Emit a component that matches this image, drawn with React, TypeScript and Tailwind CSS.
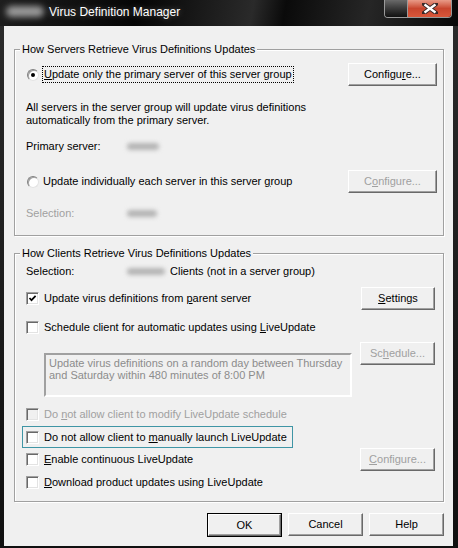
import React from 'react';

const U = ({ children }: { children: React.ReactNode }) => (
  <span className="underline underline-offset-[1px] decoration-[1px]">{children}</span>
);

function Btn({
  children,
  disabled,
  isDefault,
  w = 'w-[75px]',
}: {
  children: React.ReactNode;
  disabled?: boolean;
  isDefault?: boolean;
  w?: string;
}) {
  const face = (
    <div
      className={`h-full w-full flex items-center justify-center bg-[#f0f0f0] border border-t-white border-l-white border-r-[#696969] border-b-[#696969] shadow-[inset_-1px_-1px_0_#a0a0a0] ${
        disabled ? 'text-[#a0a0a0]' : 'text-black'
      }`}
    >
      {children}
    </div>
  );
  if (isDefault) {
    return <div className={`h-[24px] ${w} shrink-0 border border-black`}>{face}</div>;
  }
  return <div className={`h-[23px] ${w} shrink-0`}>{face}</div>;
}

function Check({ checked, disabled }: { checked?: boolean; disabled?: boolean }) {
  return (
    <span
      className={`w-[13px] h-[13px] shrink-0 flex items-center justify-center border border-t-[#a0a0a0] border-l-[#a0a0a0] border-r-white border-b-white shadow-[inset_1px_1px_0_#696969,inset_-1px_-1px_0_#e3e3e3] ${
        disabled ? 'bg-[#f0f0f0]' : 'bg-white'
      }`}
    >
      {checked && (
        <svg width="9" height="9" viewBox="0 0 9 9">
          <path d="M1.5 4 L3.5 6.2 L7.6 1.8" fill="none" stroke="#000" strokeWidth="1.7" />
        </svg>
      )}
    </span>
  );
}

function Radio({ checked }: { checked?: boolean }) {
  return (
    <span className="w-[12px] h-[12px] shrink-0 rounded-full flex items-center justify-center bg-white border border-t-[#808080] border-l-[#808080] border-r-[#e3e3e3] border-b-[#e3e3e3] shadow-[inset_1px_1px_0_#a0a0a0]">
      {checked && <span className="w-[4px] h-[4px] rounded-full bg-black" />}
    </span>
  );
}

const Blob = ({ w }: { w: string }) => (
  <span className={`inline-block h-[7px] ${w} rounded-full bg-[#b4b4b4] blur-[2px]`} />
);

function Group({
  title,
  children,
  className = '',
}: {
  title: string;
  children: React.ReactNode;
  className?: string;
}) {
  return (
    <div
      className={`relative ml-[10px] w-[430px] border border-[#a0a0a0] shadow-[inset_1px_1px_0_#fff,1px_1px_0_#fff] ${className}`}
    >
      <span className="absolute -top-[7px] left-[5px] bg-[#f0f0f0] px-[2px] leading-[13px]">{title}</span>
      {children}
    </div>
  );
}

export default function App() {
  return (
    <div className="w-[458px] h-[548px] flex flex-col bg-gradient-to-b from-[#2c2c2c] to-[#101010] text-[11px] leading-[13px] whitespace-nowrap font-['Liberation_Sans',Arial,sans-serif] overflow-hidden">
      {/* Title bar */}
      <div className="h-[26px] shrink-0 flex items-start justify-between bg-[linear-gradient(100deg,#1e1e1e_0%,#050505_30%,#2a2a2a_55%,#0a0a0a_62%,#262626_80%,#080808_100%)]">
        <div className="flex items-center h-[26px] pb-[3px]">
          <span className="ml-[6px] w-[38px] h-[11px] rounded-full bg-[#9a9a9a] blur-[3px]" />
          <span className="ml-[5px] text-white text-[12px] leading-[14px] [text-shadow:0_0_6px_rgba(255,255,255,0.35)]">
            Virus Definition Manager
          </span>
        </div>
        <div className="mr-[6px] flex h-[18px] border border-t-0 border-[#9a9a9a] rounded-b-[4px] overflow-hidden">
          <div className="w-[23px] h-full bg-gradient-to-b from-[#6a6a6a] via-[#3a3a3a] to-[#111] border-r border-[#9a9a9a]" />
          <div className="w-[43px] h-full flex items-center justify-center bg-gradient-to-b from-[#e89a88] via-[#c8452e] to-[#d9573a]">
            <svg width="16" height="11" viewBox="0 0 16 11">
              <path d="M2 1 L14 10 M14 1 L2 10" stroke="#3a2a2a" strokeWidth="4.2" strokeLinecap="square" />
              <path d="M2.5 1.5 L13.5 9.5 M13.5 1.5 L2.5 9.5" stroke="#fff" strokeWidth="2.2" />
            </svg>
          </div>
        </div>
      </div>

      {/* Client area */}
      <div className="flex-1 ml-[4px] mr-[5px] mb-[2px] bg-[#f0f0f0] text-black flex flex-col">
        <Group title="How Servers Retrieve Virus Definitions Updates" className="mt-[23px]">
          <div className="pt-[13px] pb-[15px]">
            <div className="h-[23px] flex items-center justify-between pl-[12px] pr-[6px]">
              <div className="flex items-center">
                <Radio checked />
                <span className="ml-[3px] border border-dotted border-black px-[1px] leading-[15px]">
                  <U>U</U>pdate only the primary server of this server group
                </span>
              </div>
              <Btn w="w-[89px]">
                Configu<U>r</U>e...
              </Btn>
            </div>
            <div className="mt-[15px] pl-[11px]">
              All servers in the server group will update virus definitions
              <br />
              automatically from the primary server.
            </div>
            <div className="mt-[13px] pl-[11px] flex items-center">
              <span className="w-[101px]">Primary server:</span>
              <Blob w="w-[32px]" />
            </div>
            <div className="mt-[17px] h-[23px] flex items-center justify-between pl-[12px] pr-[6px]">
              <div className="flex items-center">
                <Radio />
                <span className="ml-[4px]">
                  Update individually each server in this server <U>g</U>roup
                </span>
              </div>
              <Btn w="w-[89px]" disabled>
                C<U>o</U>nfigure...
              </Btn>
            </div>
            <div className="mt-[14px] pl-[11px] flex items-center text-[#a0a0a0]">
              <span className="w-[101px]">Selection:</span>
              <Blob w="w-[30px]" />
            </div>
          </div>
        </Group>

        <Group title="How Clients Retrieve Virus Definitions Updates" className="mt-[17px]">
          <div className="pt-[11px] pb-[7px]">
            <div className="pl-[11px] flex items-center">
              <span className="w-[101px]">Selection:</span>
              <Blob w="w-[38px]" />
              <span className="ml-[5px]">Clients (not in a server group)</span>
            </div>
            <div className="mt-[9px] h-[23px] flex items-center justify-between pl-[11px] pr-[8px]">
              <div className="flex items-center">
                <Check checked />
                <span className="ml-[5px]">
                  Update virus definitions from <U>p</U>arent server
                </span>
              </div>
              <Btn w="w-[74px]">
                <U>S</U>ettings
              </Btn>
            </div>
            <div className="mt-[6px] h-[23px] flex items-center pl-[11px]">
              <Check />
              <span className="ml-[5px]">
                Schedule client for automatic updates using <U>L</U>iveUpdate
              </span>
            </div>
            <div className="mt-[3px] flex items-start justify-between pl-[11px] pr-[8px]">
              <div className="mt-[11px] ml-[18px] w-[308px] h-[44px] border-2 border-t-[#a0a0a0] border-l-[#a0a0a0] border-r-white border-b-white bg-[#f0f0f0] text-[#8c8c8c] pl-[3px] pt-[2px] leading-[12px]">
                Update virus definitions on a random day between Thursday
                <br />
                and Saturday within 480 minutes of 8:00 PM
              </div>
              <Btn disabled>
                Sc<U>h</U>edule...
              </Btn>
            </div>
            <div className="mt-[6px] h-[23px] flex items-center pl-[11px] text-[#a0a0a0]">
              <Check disabled />
              <span className="ml-[5px]">
                Do <U>n</U>ot allow client to modify LiveUpdate schedule
              </span>
            </div>
            <div className="h-[22px] pl-[7px] flex">
              <div className="h-[22px] border border-[#3f95a5] pl-[3px] pr-[5px] flex items-center">
                <Check />
                <span className="ml-[5px]">
                  Do not allow client to <U>m</U>anually launch LiveUpdate
                </span>
              </div>
            </div>
            <div className="h-[23px] flex items-center justify-between pl-[11px] pr-[8px]">
              <div className="flex items-center">
                <Check />
                <span className="ml-[5px]">
                  <U>E</U>nable continuous LiveUpdate
                </span>
              </div>
              <Btn disabled>
                <U>C</U>onfigure...
              </Btn>
            </div>
            <div className="h-[23px] flex items-center pl-[11px]">
              <Check />
              <span className="ml-[5px]">
                <U>D</U>ownload product updates using LiveUpdate
              </span>
            </div>
          </div>
        </Group>

        <div className="mt-[11px] mr-[9px] flex justify-end items-start gap-[6px]">
          <Btn isDefault>OK</Btn>
          <Btn>Cancel</Btn>
          <Btn>Help</Btn>
        </div>
      </div>
    </div>
  );
}
